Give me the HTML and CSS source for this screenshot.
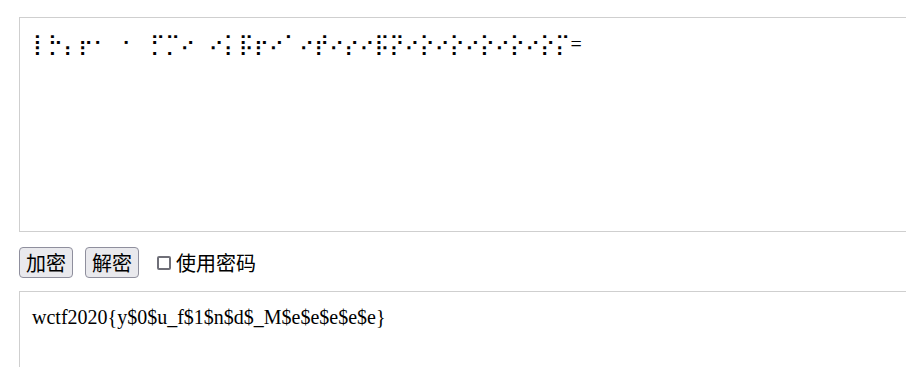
FILE: index.html
```html
<!DOCTYPE html>
<html lang="zh-CN">
<head>
<meta charset="utf-8">
<title>盲文加密</title>
<link rel="stylesheet" href="styles.css">
</head>
<body>
<div class="page">
  <div class="box box-input"><span class="braille">⡇⡓⡄⡖⠂<span class="gap">⠀</span>⠂<span class="gap">⠀</span>⡋⡉⠔<span class="gap">⠀</span>⠔⡅⡯⡖⠔⠁⠔⡞⠔⡔⠔⡯⡝⠔⡕⠔⡕⠔⡕⠔⡕⠔⡕⡍</span><span class="eq">=</span></div>
  <div class="controls">
    <button class="btn" type="button">加密</button>
    <button class="btn" type="button">解密</button>
    <label class="check"><input type="checkbox" class="check-input"><span class="check-text">使用密码</span></label>
  </div>
  <div class="box box-output">wctf2020{y$0$u_f$1$n$d$_M$e$e$e$e$e}</div>
</div>
</body>
</html>
```
FILE: styles.css
```css
html, body {
  margin: 0;
  padding: 0;
  background: #ffffff;
  overflow: hidden;
}

.page {
  display: flex;
  flex-direction: column;
  align-items: flex-start;
  padding: 17px 0 0 19px;
}

.box {
  box-sizing: border-box;
  width: 920px;
  border: 1px solid #cfcfcf;
  background: #ffffff;
  color: #000000;
}

.box-input {
  height: 215px;
  padding: 12px 13px;
  white-space: pre;
}

.braille {
  font-family: "DejaVu Sans", sans-serif;
  font-size: 20px;
  line-height: 28px;
  letter-spacing: 0.42px;
}

.gap {
  letter-spacing: -1.3px;
}

.eq {
  font-family: "Liberation Serif", serif;
  font-size: 20px;
}

.controls {
  display: flex;
  align-items: center;
  margin-top: 15px;
  height: 31px;
}

.btn {
  box-sizing: border-box;
  height: 31px;
  width: 54px;
  padding: 0;
  margin: 0;
  font-family: "Noto Sans CJK SC", sans-serif;
  font-size: 20px;
  line-height: 1;
  color: #000000;
  background: #e9e9ed;
  border: 1px solid #8f8f9d;
  border-radius: 4px;
}

.btn + .btn {
  margin-left: 12px;
}

.check {
  display: flex;
  align-items: center;
  margin-left: 18px;
  font-family: "Noto Sans CJK SC", sans-serif;
  font-size: 20px;
  color: #000000;
}

.check-input {
  appearance: none;
  -webkit-appearance: none;
  box-sizing: border-box;
  width: 14px;
  height: 14px;
  margin: 1px 5px 0 0;
  border: 2px solid #6f6f78;
  border-radius: 2px;
  background: #ffffff;
}

.box-output {
  margin-top: 13px;
  height: 120px;
  padding: 13px 12px;
  font-family: "Liberation Serif", serif;
  font-size: 20px;
  line-height: 24px;
  white-space: pre;
}
```
